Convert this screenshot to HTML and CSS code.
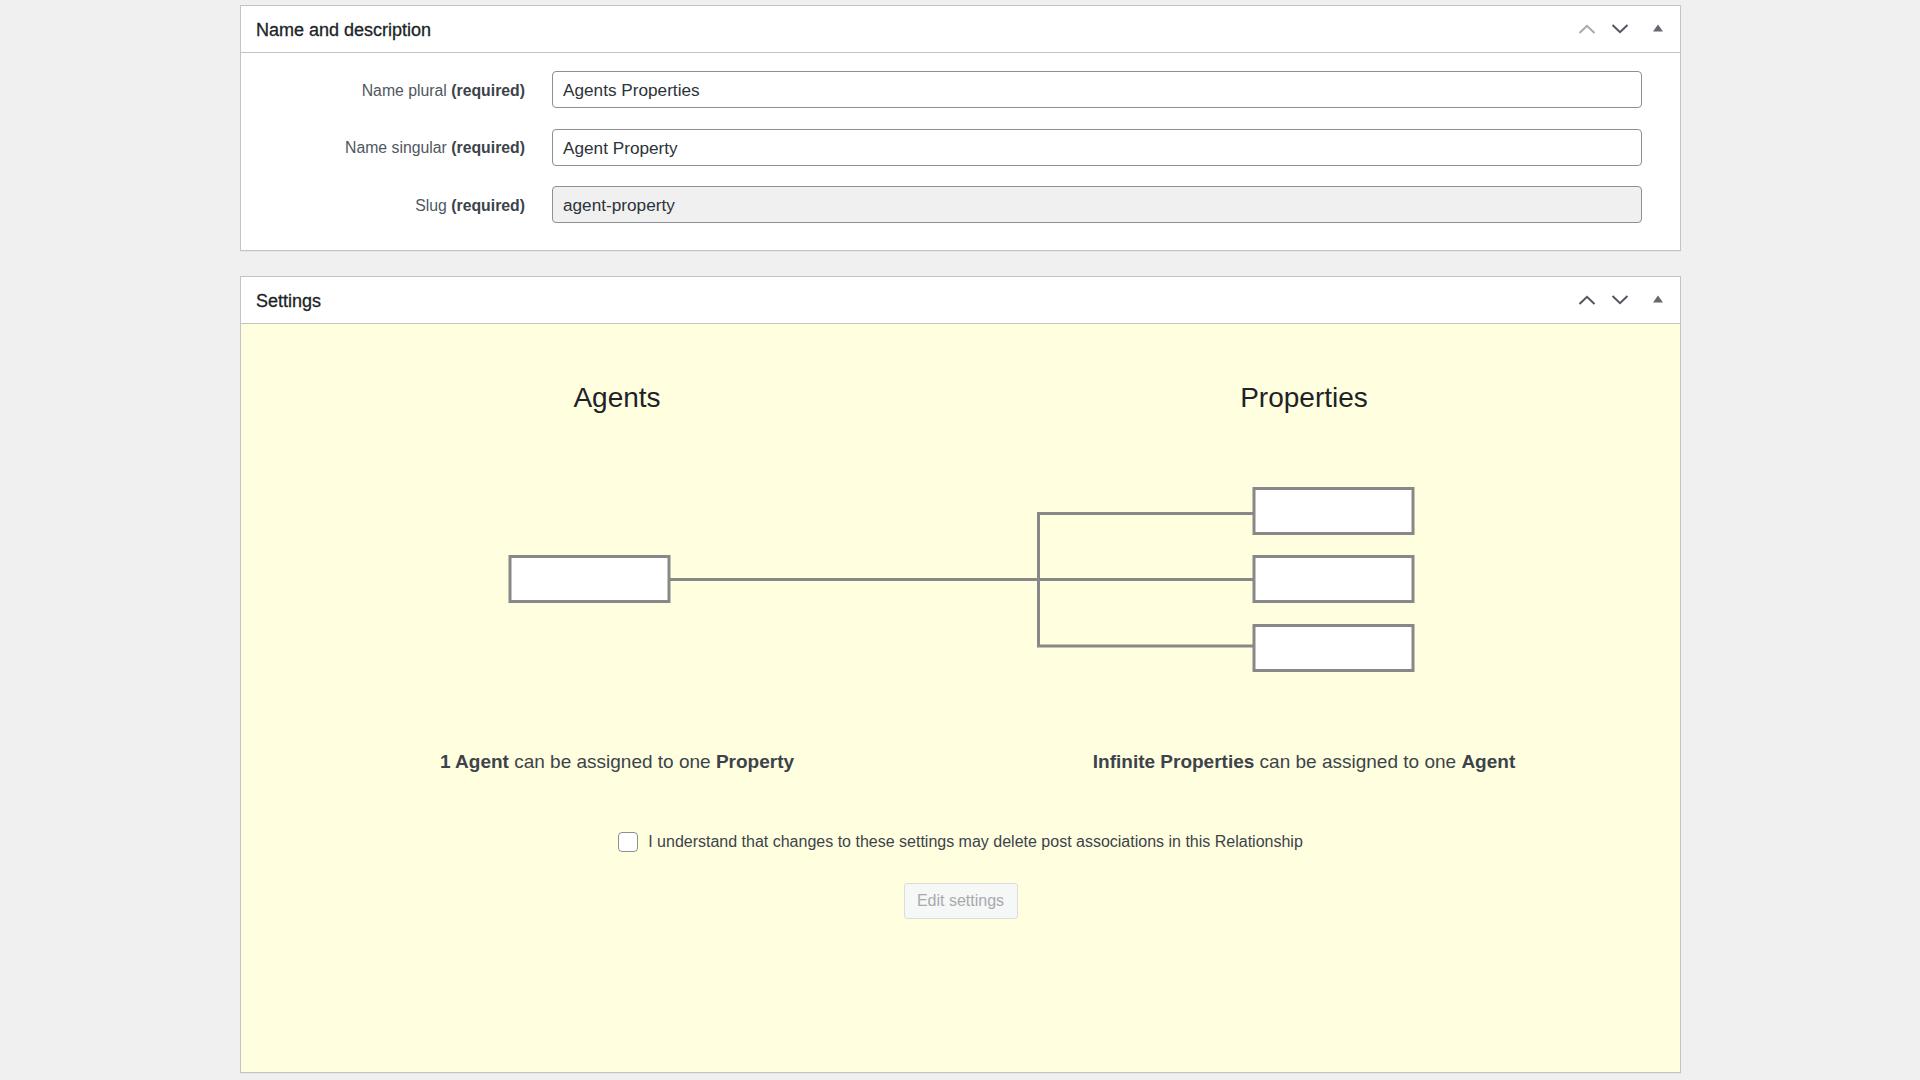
FILE: index.html
```html
<!DOCTYPE html>
<html lang="en">
<head>
    <meta charset="UTF-8">
    <meta name="viewport" content="width=device-width, initial-scale=1.0">
    <title>Edit Relationship</title>
    <link rel="stylesheet" href="styles.css">
</head>
<body>
    <div class="wrap">
        <div class="postbox">
            <div class="postbox-header">
                <h2 class="hndle">Name and description</h2>
                <div class="handle-actions">
                    <button class="handle-btn disabled" type="button" aria-label="Move up">
                        <svg width="18" height="10" viewBox="0 0 18 10"><path d="M1.5 9 L9 1.8 L16.5 9" fill="none" stroke="currentColor" stroke-width="2"/></svg>
                    </button>
                    <button class="handle-btn" type="button" aria-label="Move down">
                        <svg width="18" height="10" viewBox="0 0 18 10"><path d="M1.5 1 L9 8.2 L16.5 1" fill="none" stroke="currentColor" stroke-width="2"/></svg>
                    </button>
                    <button class="handle-btn toggle" type="button" aria-label="Toggle panel">
                        <svg width="10" height="8" viewBox="0 0 10 8"><polygon points="0,7.5 5,0.5 10,7.5" fill="currentColor"/></svg>
                    </button>
                </div>
            </div>
            <div class="inside">
                <div class="form-grid">
                    <label for="name-plural">Name plural <strong>(required)</strong></label>
                    <input type="text" id="name-plural" value="Agents Properties">

                    <label for="name-singular">Name singular <strong>(required)</strong></label>
                    <input type="text" id="name-singular" value="Agent Property">

                    <label for="slug">Slug <strong>(required)</strong></label>
                    <input type="text" id="slug" value="agent-property" readonly>
                </div>
            </div>
        </div>

        <div class="postbox">
            <div class="postbox-header">
                <h2 class="hndle">Settings</h2>
                <div class="handle-actions">
                    <button class="handle-btn" type="button" aria-label="Move up">
                        <svg width="18" height="10" viewBox="0 0 18 10"><path d="M1.5 9 L9 1.8 L16.5 9" fill="none" stroke="currentColor" stroke-width="2"/></svg>
                    </button>
                    <button class="handle-btn" type="button" aria-label="Move down">
                        <svg width="18" height="10" viewBox="0 0 18 10"><path d="M1.5 1 L9 8.2 L16.5 1" fill="none" stroke="currentColor" stroke-width="2"/></svg>
                    </button>
                    <button class="handle-btn toggle" type="button" aria-label="Toggle panel">
                        <svg width="10" height="8" viewBox="0 0 10 8"><polygon points="0,7.5 5,0.5 10,7.5" fill="currentColor"/></svg>
                    </button>
                </div>
            </div>
            <div class="inside relationship">
                <div class="diagram">
                    <div class="columns">
                        <h3 class="side-title">Agents</h3>
                        <h3 class="side-title">Properties</h3>
                    </div>

                    <!-- one-to-many: one agent, three properties -->
                    <svg class="diagram-svg" width="1374" height="192" viewBox="0 0 1374 192">
                        <g fill="none" stroke="#888888" stroke-width="3">
                            <path d="M396 98.5 H980"/>
                            <path d="M980 32.5 H764.5 V165 H980"/>
                        </g>
                        <g fill="#ffffff" stroke="#888888" stroke-width="3">
                            <rect x="236" y="75.5" width="159" height="45"/>
                            <rect x="980" y="7.5" width="159" height="45"/>
                            <rect x="980" y="75.5" width="159" height="45"/>
                            <rect x="980" y="144.5" width="159" height="45"/>
                        </g>
                    </svg>

                    <div class="columns">
                        <p class="summary"><strong>1 Agent</strong> can be assigned to one <strong>Property</strong></p>
                        <p class="summary"><strong>Infinite Properties</strong> can be assigned to one <strong>Agent</strong></p>
                    </div>
                </div>

                <label class="confirm">
                    <input type="checkbox">
                    <span>I understand that changes to these settings may delete post associations in this Relationship</span>
                </label>

                <div class="actions">
                    <button class="button" type="button" disabled>Edit settings</button>
                </div>
            </div>
        </div>
    </div>
</body>
</html>
```

FILE: styles.css
```css
body {
    margin: 0;
    background-color: #f0f0f1;
    font-family: "Liberation Sans", Arial, sans-serif;
    color: #3c434a;
}

.wrap {
    padding-top: 5px;
}

.postbox {
    width: 1441px;
    margin: 0 0 25px 240px;
    box-sizing: border-box;
    background-color: #fff;
    border: 1px solid #c3c4c7;
    box-shadow: 0 1px 1px rgba(0,0,0,0.04);
}

.postbox-header {
    display: flex;
    align-items: center;
    justify-content: space-between;
    height: 46px;
    border-bottom: 1px solid #c3c4c7;
}

.hndle {
    margin: 0;
    padding: 2px 0 0 15px;
    font-size: 18px;
    font-weight: 400;
    color: #1d2327;
    -webkit-text-stroke: 0.3px #1d2327;
}

.handle-actions {
    display: flex;
    height: 100%;
}

.handle-btn {
    width: 33px;
    height: 100%;
    padding: 0;
    border: none;
    background: none;
    color: #50575e;
    display: flex;
    align-items: center;
    justify-content: center;
    cursor: pointer;
}

.handle-btn.disabled {
    color: #a7aaad;
}

.handle-btn.toggle {
    width: 44px;
    color: #646970;
    padding-bottom: 3px;
}

.inside {
    padding: 18px 38px 27px 0;
}

.form-grid {
    display: grid;
    grid-template-columns: 284px 1fr;
    column-gap: 27px;
    row-gap: 20.5px;
    align-items: center;
}

.form-grid label {
    text-align: right;
    font-size: 15.8px;
    padding-top: 2px;
    color: #50575e;
}

.form-grid label strong {
    color: #3c434a;
}

.form-grid input {
    height: 37px;
    box-sizing: border-box;
    padding: 2px 10px 0 10px;
    border: 1px solid #8c8f94;
    border-radius: 4px;
    font-family: inherit;
    font-size: 17.2px;
    color: #2c3338;
    background-color: #fff;
}

.form-grid input[readonly] {
    background-color: #f0f0f1;
}

.relationship {
    background-color: #ffffe0;
    padding: 57px 0 153px 0;
}

.diagram {
    width: 1374px;
    margin: 0 auto;
}

.columns {
    display: grid;
    grid-template-columns: 1fr 1fr;
    text-align: center;
}

.side-title {
    margin: 0;
    font-size: 28px;
    line-height: 34px;
    font-weight: 400;
    color: #1d2327;
}

.diagram-svg {
    display: block;
    margin-top: 66px;
}

.summary {
    margin: 77px 0 0 0;
    font-size: 19px;
    line-height: 24px;
    color: #3c434a;
}

.confirm {
    display: flex;
    align-items: center;
    justify-content: center;
    gap: 10px;
    margin-top: 56px;
    height: 24px;
    font-size: 16px;
    color: #3c434a;
}

.confirm input {
    appearance: none;
    -webkit-appearance: none;
    width: 20px;
    height: 20px;
    margin: 0;
    border: 1px solid #8c8f94;
    border-radius: 4px;
    background-color: #fff;
}

.actions {
    display: flex;
    justify-content: center;
    margin-top: 29px;
}

.button {
    width: 114px;
    height: 36px;
    border: 1px solid #dcdcde;
    border-radius: 3px;
    background-color: #f6f7f7;
    color: #a7aaad;
    font-family: inherit;
    font-size: 16px;
}
```
